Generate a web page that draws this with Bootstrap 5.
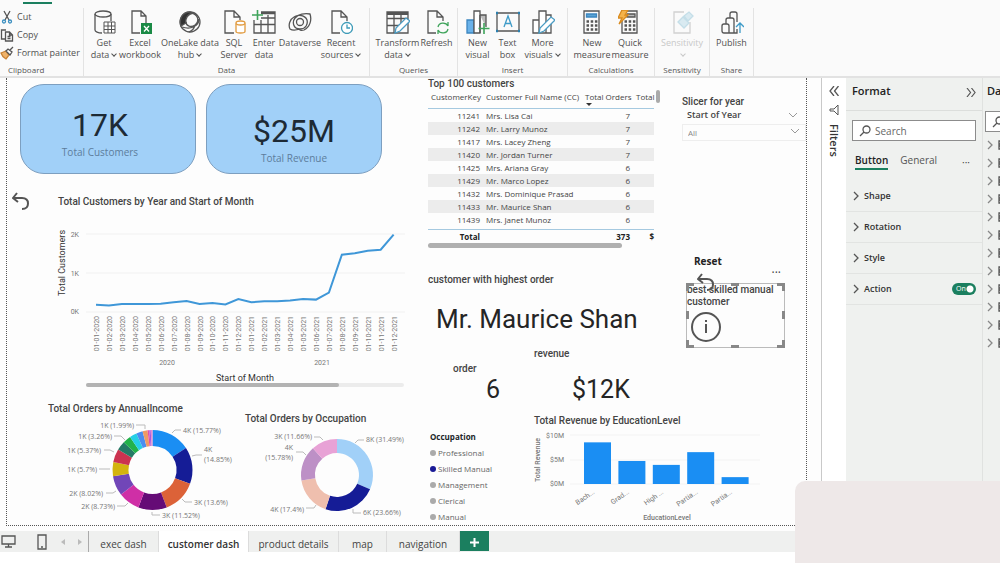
<!DOCTYPE html>
<html lang="en">
<head>
<meta charset="utf-8">
<meta name="viewport" content="width=device-width, initial-scale=1">
<title>customer dash</title>
<link href="https://cdn.jsdelivr.net/npm/bootstrap@5.3.0/dist/css/bootstrap.min.css" rel="stylesheet">
<style>
  :root { --ui: "Open Sans", "Noto Sans", sans-serif; --din: Roboto, "Liberation Sans", sans-serif; --green: #1b7f5f; }
  body { font-family: var(--ui); font-size: 9px; line-height: 12px; color: #444; background: #fff; overflow-x: hidden; }
  button { color: inherit; font: inherit; background: none; border: 0; padding: 0; }
  svg { display: block; }
  .ico { fill: none; stroke: #555; stroke-width: 1.3; }
  /* ribbon */
  .ribbon { background: #fafafa; border-bottom: 2px solid #e2e2e2; height: 78px; overflow: hidden; }
  .ribbon-tabs { height: 8px; padding: 2px 0 0 23px; }
  .ribbon-tabs span { width: 29px; height: 2px; background: var(--green); }
  .grp { border-right: 1px solid #e3e3e3; flex: none; height: 68px; }
  .grp-name { font-size: 8px; line-height: 12px; color: #555; }
  .tool { white-space: nowrap; color: #505050; flex: none; }
  .tool svg { width: 24px; height: 24px; margin: 2px 0 3px; }
  .tool[disabled] { color: #c8c8c8; }
  .drop::after { content: ""; display: inline-block; width: 4px; height: 4px; margin: 0 1px 3px 3px; border: solid currentColor; border-width: 0 1px 1px 0; transform: rotate(45deg); vertical-align: middle; }
  .clip { height: 18px; gap: 3px; color: #505050; }
  .w28 { width: 28px } .w32 { width: 32px } .w36 { width: 38px } .w40 { width: 40px } .w42 { width: 42px } .w46 { width: 46px } .w60 { width: 60px }
  .g-clip { width: 84px } .g-data { width: 286px } .g-query { width: 88px } .g-insert { width: 110px } .g-calc { width: 87px } .g-sens { width: 55px } .g-share { width: 44px }
  /* report canvas */
  .stage { background: #fdfdfd; border-right: 1px solid #c9c9c9; padding: 0 14px 5px 6px; min-width: 0; }
  .report { border: 1px dotted #555; border-top: 0; }
  .row-top { display: grid; grid-template-columns: 421fr 233fr 145fr; height: 325px; }
  .row-low { display: grid; grid-template-columns: 195fr 186fr 102fr 275fr; padding-left: 41px; }
  .vtitle { font-family: var(--din); font-size: 10px; line-height: 12px; font-weight: 500; color: #444; white-space: nowrap; margin: 0; }
  .kpis { display: grid; grid-template-columns: 1fr 1fr; padding: 6px 46px 0 13px; gap: 10px; }
  .kpi { background: #a1d0f8; border: 1px solid #7d9fc0; border-radius: 24px; height: 90px; padding: 22px 16px 0 0; font-size: 10px; color: #5d7d9c; }
  .kpi.lower { padding: 28px 0 0; }
  .kpi strong, .figure-text { font-family: var(--din); font-weight: 400; color: #1d2a35; font-size: 32px; line-height: 36px; }
  .kpi strong { margin-bottom: 3px; }
  .figure-text { font-size: 25px; line-height: 30px; color: #252525; white-space: nowrap; }
  .figure-text.name { font-size: 26px; padding: 18px 8px 0; }
  .back { padding: 18px 0 0 5px; gap: 29px; }
  .line-box { padding: 2px 11px 0 43px; }
  svg text { font-family: var(--din); font-size: 7px; fill: #777; }
  svg .axis { font-size: 9px; fill: #333; }
  svg .lab { font-family: var(--ui); fill: #777; }
  .orders { width: 226px; height: 153px; }
  .orders table { width: 226px; table-layout: fixed; font-size: 8px; line-height: 13px; color: #444; white-space: nowrap; border-collapse: collapse; }
  .orders th, .orders td { padding: 0 3px; font-weight: 400; }
  .orders thead th { height: 18px; vertical-align: top; border-bottom: 1px solid #a5c9e0; }
  .orders tbody tr:nth-child(even) { background: #ececec; }
  .orders tbody tr:last-child td { height: 17px; vertical-align: top; }
  .orders tfoot td { border-top: 1px solid #a5c9e0; font-weight: 700; color: #222; }
  .orders .sorted { position: relative; }
  .orders .sorted::after { content: ""; position: absolute; left: 4px; bottom: 2px; border: 3px solid transparent; border-top-color: #333; border-bottom: 0; }
  .c1 { width: 55px } .c2 { width: 99px } .c3 { width: 51px }
  .thumb-v { width: 4px; height: 13px; background: #aaa; border-radius: 2px; margin-left: 2px; }
  .thumb-h { height: 5px; width: 194px; background: #b0b0b0; border-radius: 3px; }
  .best { margin-top: 26px; }
  .facts { margin-top: 14px; }
  .fact-order { width: 75px; padding: 15px 3px 0 25px; }
  .fact-revenue { padding-left: 31px; }
  .fact-revenue .figure-text { padding: 15px 0 0 38px; }
  .slicer-col { padding: 18px 6px 0 21px; }
  .slicer-name { font-size: 9px; font-weight: 600; padding: 1px 2px 0 5px; }
  .year-box select { appearance: none; flex: 1; margin-top: 3px; height: 17px; border: 1px solid #eee; background: transparent; color: #888; font-size: 8px; padding: 0 5px; }
  .year-box svg { margin-left: -16px; }
  .slicer .ico { stroke: #999; }
  .reset { margin: 114px 0 0 12px; color: #222; font-size: 10px; }
  .more { text-align: right; padding-right: 19px; font-size: 12px; line-height: 12px; }
  .sel { width: 99px; height: 65px; border: 1px solid #bbb; position: relative; margin: 4px 0 0 4px; }
  .sel i { position: absolute; width: 8px; height: 8px; border: 0 solid #888; }
  .sel .tl { left: -1px; top: -1px; border-width: 3px 0 0 3px } .sel .tr { right: -1px; top: -1px; border-width: 3px 3px 0 0 }
  .sel .bl { left: -1px; bottom: -1px; border-width: 0 0 3px 3px } .sel .br { right: -1px; bottom: -1px; border-width: 0 3px 3px 0 }
  .sel .mt { left: 44px; top: -1px; border-top-width: 3px } .sel .mb { left: 44px; bottom: -1px; border-bottom-width: 3px }
  .sel .ml { left: -1px; top: 27px; border-left-width: 3px } .sel .mr { right: -1px; top: 27px; border-right-width: 3px }
  .reset-ico { position: absolute; left: 10px; top: -11px; }
  .legend-list { padding: 26px 0 0 1px; color: #666; font-size: 8px; line-height: 16px; }
  .legend-list .d-flex { gap: 2px; }
  .dot { width: 6px; height: 6px; border-radius: 50%; background: #aaa; }
  .dot.on { background: #1a1a96; }
  .occ { padding: 10px 0 0 2px; }
  .edu { padding: 12px 0 0 3px; }
  /* side panes */
  .pane { background: #eff1ef; flex: none; }
  .filters { width: 24px; background: #fff; flex: none; color: #333; }
  .filters span { writing-mode: vertical-rl; font-size: 11px; font-weight: 600; line-height: 14px; }
  .format { width: 137px; border-right: 1px solid #e0e2e0; }
  .pane h2 { font-size: 11px; line-height: 14px; font-weight: 600; color: #222; margin: 0; }
  .pane-head { height: 33px; padding: 6px 6px 0; border-bottom: 1px solid #dcdedc; }
  .find { border: 1px solid #8c8c8c; background: #fff; height: 21px; margin: 9px 6px 0; padding: 0 6px; gap: 4px; }
  .find input { border: 0; outline: 0; width: 100%; min-width: 0; font-size: 10px; padding: 0; background: none; }
  .find input::placeholder { color: #666; }
  .ftabs { font-size: 10px; line-height: 14px; padding: 12px 12px 11px 9px; gap: 12px; }
  .ftabs a { color: #555; text-decoration: none; padding-bottom: 1px; border-bottom: 2px solid transparent; }
  .ftabs a.active { color: #222; font-weight: 600; border-color: var(--green); }
  .opt { height: 31px; border-bottom: 1px solid #e2e4e2; padding: 0 6px; gap: 4px; font-weight: 600; color: #333; }
  .switch-on { position: relative; color: #fff; font-size: 7px; font-weight: 400; }
  .switch-on input { appearance: none; display: block; width: 24px; height: 12px; border-radius: 6px; background: radial-gradient(circle at 18px 6px, #fff 3px, var(--green) 4px); }
  .switch-on span { position: absolute; left: 4px; top: 0; }
  .data { width: 17px; overflow: hidden; }
  .data .pane-head { border-color: transparent; padding: 6px 0 0 4px; }
  .data .find { margin: 0 -20px 4px 2px; }
  .tree { height: 18px; padding-left: 4px; gap: 4px; }
  /* page tabs */
  .pages { background: #eff0ef; height: 21px; margin-bottom: 11px; font-size: 10px; flex: none; }
  .pages a { color: #444; text-decoration: none; border-right: 1px solid #dcdcdc; height: 21px; padding-top: 4px; }
  .pages a.active { background: #fff; font-weight: 600; color: #333; }
  .view { width: 89px; border-right: 1px solid #aaa; height: 21px; padding: 0 6px 0 1px; }
  .p70 { width: 70px } .p90 { width: 90px } .p48 { width: 48px } .p73 { width: 73px }
  .add { width: 29px; height: 20px; background: var(--green); color: #fff; padding-top: 2px; }
  .note { position: fixed; right: 0; bottom: 0; width: 205px; height: 82px; background: #eee8e8; border-radius: 10px 0 0 0; }
</style>
</head>
<body class="min-vh-100 d-flex flex-column">
<header class="ribbon">
  <div class="ribbon-tabs"><span class="d-block"></span></div>
  <div class="d-flex">
    <section class="grp g-clip d-flex flex-column">
      <button class="clip d-flex align-items-center"><svg class="ico" width="14" height="14" viewBox="0 0 14 14"><path d="M4 1l5 9M10 1L5 10"/><circle cx="4" cy="11.500" r="1.500" stroke="#3b8fc0"/><circle cx="10" cy="11.500" r="1.500" stroke="#3b8fc0"/></svg>Cut</button>
      <button class="clip d-flex align-items-center"><svg class="ico" width="14" height="14" viewBox="0 0 14 14"><path d="M5 11H1.500V2H6M5.500 4h4l3 3v6h-7zM9.500 4v3h3M7.500 8.500h3M7.500 10.500h3"/></svg>Copy</button>
      <button class="clip d-flex align-items-center text-nowrap"><svg class="ico" width="14" height="14" viewBox="0 0 14 14"><path d="M1 7l5-2 3 4-3 4C4 12 2 10 1 7z" fill="#efb36b" stroke="#c98336"/><path d="M6 5l2-2 4 3-2 3zM10 4l3-3" fill="#fff"/></svg>Format painter</button>
      <div class="grp-name ps-2 mt-auto">Clipboard</div>
    </section>
    <section class="grp g-data d-flex flex-column">
      <div class="d-flex align-items-start ps-1">
        <button class="tool w32 d-flex flex-column align-items-center"><svg class="ico" viewBox="0 0 24 24"><ellipse cx="11" cy="4" rx="8" ry="3"/><path d="M3 4v16c0 1.500 3 3 7 3M19 4v7"/><path d="M12 12h11v11H12zM12 16h11M12 19.500h11M16 12v11M19.500 12v11" fill="#fff" stroke-width="1"/></svg>Get<span class="drop">data</span></button>
        <button class="tool w40 d-flex flex-column align-items-center"><svg class="ico" viewBox="0 0 24 24"><path d="M12 23H4V1h9l5 5v7M13 1v5h5"/><rect x="13" y="13" width="11" height="11" fill="#1a8a45" stroke="none"/><path d="M16 16l5 5.500M21 16l-5 5.500" stroke="#fff"/></svg>Excel<span>workbook</span></button>
        <button class="tool w60 d-flex flex-column align-items-center"><svg class="ico" viewBox="0 0 24 24"><circle cx="12" cy="12" r="10"/><path d="M12 2C4 2 1 9 3 16l5-3C7 8 10 4 15 3z" fill="#333"/><path d="M13 3c7 1 9 8 4 12-4 3-9 1-9-3M21 9c0 7-8 11-17 8M17 15c-1 4-3 6-6 7"/></svg>OneLake data<span class="drop">hub</span></button>
        <button class="tool w28 d-flex flex-column align-items-center"><svg class="ico" viewBox="0 0 24 24"><path d="M12 23H3V1h9l6 6v3M12 1v6h6"/><path d="M14 13.500v8c0 2 9 2 9 0v-8" fill="#fff" stroke="#e19a3e"/><ellipse cx="18.500" cy="13" rx="4.500" ry="2" fill="#fff" stroke="#e19a3e"/></svg>SQL<span>Server</span></button>
        <button class="tool w32 d-flex flex-column align-items-center"><svg class="ico" viewBox="0 0 24 24"><path d="M9 2h14v21H2V10M9 3.500h14M2 14.500h21M9 8h14M9 10v13M16 5v18"/><path d="M5.500 0v10M0 5h11" stroke="#3fa45b" stroke-width="1.600"/></svg>Enter<span>data</span></button>
        <button class="tool w40 d-flex flex-column align-items-center"><svg class="ico" viewBox="0 0 24 24"><circle cx="12" cy="12" r="3.500"/><path d="M12 19C5 19 4 12 7 8s10-5 15-4c2 6 0 13-6 16-3 1-5 0-4-1 6 0 8-5 7-9-2-5-9-6-13-3-4 2-6 8-4 12 3 2 7 1 10 0"/></svg>Dataverse</button>
        <button class="tool w42 d-flex flex-column align-items-center"><svg class="ico" viewBox="0 0 24 24"><path d="M11 23H3V1h9l6 6v4M12 1v6h6"/><circle cx="18" cy="18" r="5.500" fill="#fff" stroke="#3e9bb8"/><path d="M18 14.500V18h3" stroke="#3e9bb8"/></svg>Recent<span class="drop">sources</span></button>
      </div>
      <div class="grp-name text-center mt-auto">Data</div>
    </section>
    <section class="grp g-query d-flex flex-column">
      <div class="d-flex align-items-start justify-content-center">
        <button class="tool w46 d-flex flex-column align-items-center"><svg class="ico" viewBox="0 0 24 24"><path d="M1 2h21v21H1zM1 8.500h21M1 15.500h12M8 5v18M15 5v8"/><path d="M1 3.500h21" stroke-width="3"/><path d="M9 23l1-5L20 8l4 3-10 10z" fill="#fff" stroke="#4a9cc4"/></svg>Transform<span class="drop">data</span></button>
        <button class="tool w32 d-flex flex-column align-items-center"><svg class="ico" viewBox="0 0 24 24"><path d="M11 23H3V1h9l6 6v4M12 1v6h6"/><path d="M13 17c1-5 8-5 10-1v-4M23 19c-1 5-8 5-10 1v4" stroke="#3fa45b"/></svg>Refresh</button>
      </div>
      <div class="grp-name text-center mt-auto">Queries</div>
    </section>
    <section class="grp g-insert d-flex flex-column">
      <div class="d-flex align-items-start justify-content-center">
        <button class="tool w28 d-flex flex-column align-items-center"><svg class="ico" viewBox="0 0 24 24"><path d="M1 10h7v13H1z" fill="#6ab2ea" stroke="#3c86c0"/><path d="M8 1h6v22H8z" fill="#fff"/><path d="M14 5h6v12M14 5v18" fill="#bbb"/><path d="M18 13v11M12.500 18.500h11" stroke="#3fa45b" stroke-width="1.600"/></svg>New<span>visual</span></button>
        <button class="tool w32 d-flex flex-column align-items-center"><svg class="ico" viewBox="0 0 24 24"><path d="M1 3h22v18H1z"/><path d="M8 17l4-11 4 11M9.500 13.500h5" stroke="#3e9bc8"/><path d="M0 3h2M22 3h2M0 21h2M22 21h2" stroke="#2b7fae" stroke-width="2.500"/></svg>Text<span>box</span></button>
        <button class="tool w36 d-flex flex-column align-items-center"><svg class="ico" viewBox="0 0 24 24"><path d="M2 10h6v13H2zM8 1h7v22H8zM15 5h5v18h-5z" fill="#fff"/><path d="M8 23l1-5L20 7l4 3-11 11z" fill="#fff" stroke="#4a9cc4"/></svg>More<span class="drop">visuals</span></button>
      </div>
      <div class="grp-name text-center mt-auto">Insert</div>
    </section>
    <section class="grp g-calc d-flex flex-column">
      <div class="d-flex align-items-start justify-content-center">
        <button class="tool w36 d-flex flex-column align-items-center"><svg class="ico" viewBox="0 0 24 24"><path d="M4 1h15v22H4z"/><path d="M6.500 4h10v3h-10z" fill="#5ba4d4" stroke="#3c86c0"/><path d="M6.500 11.500h11M6.500 15.500h11M6.500 19.500h11" stroke-width="2.500" stroke-dasharray="2.500 1.700"/></svg>New<span>measure</span></button>
        <button class="tool w36 d-flex flex-column align-items-center"><svg class="ico" viewBox="0 0 24 24"><path d="M4 1h15v22H4z"/><path d="M9 4h8v3H9z" fill="#bbb"/><path d="M6.500 11.500h11M6.500 15.500h11M6.500 19.500h11" stroke-width="2.500" stroke-dasharray="2.500 1.700"/><path d="M4 0h6L7 5h3L1 14l3-6H0z" fill="#f5b34a" stroke="#d98b1f"/></svg>Quick<span>measure</span></button>
      </div>
      <div class="grp-name text-center mt-auto">Calculations</div>
    </section>
    <section class="grp g-sens d-flex flex-column">
      <div class="d-flex align-items-start justify-content-center">
        <button class="tool w40 d-flex flex-column align-items-center" disabled><svg class="ico" viewBox="0 0 24 24" opacity=".5"><path d="M14 2H4v21h16V12" stroke="#aaa"/><path d="M8 12l5-5 6 6-5 5zM14 6l5-4 4 4-5 5z" fill="#b9dcea" stroke="#8fc4d8"/></svg>Sensitivity<span class="drop"></span></button>
      </div>
      <div class="grp-name text-center mt-auto">Sensitivity</div>
    </section>
    <section class="grp g-share d-flex flex-column">
      <div class="d-flex align-items-start justify-content-center">
        <button class="tool w40 d-flex flex-column align-items-center"><svg class="ico" viewBox="0 0 24 24"><path d="M17 12V4q0-2-2-2h-3q-2 0-2 2v4M14 23V10q0-2-2-2H8q-2 0-2 2v4M14 23H4q-2 0-2-2v-5q0-2 2-2h3q2 0 2 2v7M14 23h3v-4"/><path d="M20 23V13M16 17l4-4 4 4" stroke="#3e9bc8"/></svg>Publish</button>
      </div>
      <div class="grp-name text-center mt-auto">Share</div>
    </section>
  </div>
</header>

<main class="d-flex flex-grow-1">
  <div class="stage flex-grow-1">
    <div class="report">
      <div class="row-top">
        <div>
          <div class="kpis">
            <div class="kpi d-flex flex-column align-items-center"><strong>17K</strong>Total Customers</div>
            <div class="kpi lower d-flex flex-column align-items-center"><strong>$25M</strong>Total Revenue</div>
          </div>
          <div class="back d-flex align-items-center">
            <button aria-label="Back"><svg class="ico" width="17" height="19" viewBox="0 0 17 19"><path d="M5 1L1 6l5 4M1 6h9q6 0 6 5.500T10 17" stroke-width="2"/></svg></button>
            <h3 class="vtitle">Total Customers by Year and Start of Month</h3>
          </div>
          <div class="line-box">
            <svg class="w-100" viewBox="50 213 367 176" id="trend">
              <text class="axis" text-anchor="middle" transform="translate(65 263) rotate(-90)">Total Customers</text>
              <path d="M86 234h319M86 273h319M86 312h319" stroke="#f1f1f1"/>
              <text x="79" y="237" text-anchor="end">2K</text><text x="79" y="276" text-anchor="end">1K</text><text x="79" y="314" text-anchor="end">0K</text>
              <text x="167" y="365" text-anchor="middle">2020</text><text x="322" y="365" text-anchor="middle">2021</text>
              <text class="axis" x="245" y="381" text-anchor="middle">Start of Month</text>
              <rect x="86" y="383" width="318" height="4" rx="2" fill="#ececec"/><rect x="86" y="383" width="253" height="4" rx="2" fill="#b3b3b3"/>
            </svg>
          </div>
        </div>

        <div>
          <h3 class="vtitle">Top 100 customers</h3>
          <div class="d-flex align-items-start">
            <div class="orders">
              <table>
                <colgroup><col class="c1"><col class="c2"><col class="c3"><col></colgroup>
                <thead><tr><th class="text-end">CustomerKey</th><th>Customer Full Name (CC)</th><th class="text-end sorted">Total Orders</th><th class="pe-0">Total</th></tr></thead>
                <tbody>
                  <tr><td class="text-end">11241</td><td>Mrs. Lisa Cai</td><td class="text-end">7</td><td></td></tr>
                  <tr><td class="text-end">11242</td><td>Mr. Larry Munoz</td><td class="text-end">7</td><td></td></tr>
                  <tr><td class="text-end">11417</td><td>Mrs. Lacey Zheng</td><td class="text-end">7</td><td></td></tr>
                  <tr><td class="text-end">11420</td><td>Mr. Jordan Turner</td><td class="text-end">7</td><td></td></tr>
                  <tr><td class="text-end">11425</td><td>Mrs. Ariana Gray</td><td class="text-end">6</td><td></td></tr>
                  <tr><td class="text-end">11429</td><td>Mr. Marco Lopez</td><td class="text-end">6</td><td></td></tr>
                  <tr><td class="text-end">11432</td><td>Mrs. Dominique Prasad</td><td class="text-end">6</td><td></td></tr>
                  <tr><td class="text-end">11433</td><td>Mr. Maurice Shan</td><td class="text-end">6</td><td></td></tr>
                  <tr><td class="text-end">11439</td><td>Mrs. Janet Munoz</td><td class="text-end">6</td><td></td></tr>
                </tbody>
                <tfoot><tr><td class="text-end">Total</td><td></td><td class="text-end">373</td><td class="text-end pe-0">$</td></tr></tfoot>
              </table>
            </div>
            <div class="thumb-v"></div>
          </div>
          <div class="thumb-h"></div>
          <h3 class="vtitle best">customer with highest order</h3>
          <div class="figure-text name">Mr. Maurice Shan</div>
          <div class="facts d-flex">
            <div class="fact-order"><h3 class="vtitle">order</h3><div class="figure-text text-end">6</div></div>
            <div class="fact-revenue"><h3 class="vtitle">revenue</h3><div class="figure-text">$12K</div></div>
          </div>
        </div>

        <div class="slicer-col">
          <div class="slicer">
            <h3 class="vtitle">Slicer for year</h3>
            <div class="d-flex justify-content-between align-items-center slicer-name"><label for="year">Start of Year</label><svg class="ico" width="10" height="6" viewBox="0 0 10 6"><path d="M1 1l4 4 4-4" stroke-width="1"/></svg></div>
            <div class="d-flex align-items-center year-box"><select id="year"><option>All</option></select><svg class="ico" width="10" height="6" viewBox="0 0 10 6"><path d="M1 1l4 4 4-4" stroke-width="1"/></svg></div>
          </div>
          <div class="reset"><strong>Reset</strong></div>
          <div class="more">···</div>
          <div class="sel">
            <i class="tl"></i><i class="tr"></i><i class="bl"></i><i class="br"></i><i class="mt"></i><i class="mb"></i><i class="ml"></i><i class="mr"></i>
            <button class="reset-ico" aria-label="Reset"><svg class="ico" width="17" height="19" viewBox="0 0 17 19"><path d="M5 1L1 6l5 4M1 6h9q6 0 6 5.500T10 17" stroke-width="2"/></svg></button>
            <h3 class="vtitle">best skilled manual<br>customer</h3>
            <button class="ms-1 mt-1" aria-label="Info"><svg class="ico" width="30" height="30" viewBox="0 0 30 30"><circle cx="15" cy="15" r="14" stroke-width="2"/><path d="M15 12v9M15 8v2" stroke-width="2"/></svg></button>
          </div>
        </div>
      </div>

      <div class="row-low">
        <div>
          <h3 class="vtitle">Total Orders by AnnualIncome</h3>
          <svg class="w-100" viewBox="48 415 195 106" id="income"></svg>
        </div>
        <div class="occ">
          <h3 class="vtitle">Total Orders by Occupation</h3>
          <svg class="w-100" viewBox="245 425 184 96" id="occupation"></svg>
        </div>
        <ul class="legend-list list-unstyled mb-0">
          <li class="fw-bold text-dark lh-1 py-1">Occupation</li>
          <li class="d-flex align-items-center"><span class="dot"></span>Professional</li>
          <li class="d-flex align-items-center"><span class="dot on"></span>Skilled Manual</li>
          <li class="d-flex align-items-center"><span class="dot"></span>Management</li>
          <li class="d-flex align-items-center"><span class="dot"></span>Clerical</li>
          <li class="d-flex align-items-center"><span class="dot"></span>Manual</li>
        </ul>
        <div class="edu">
          <h3 class="vtitle">Total Revenue by EducationLevel</h3>
          <svg class="w-100" viewBox="534 427 272 94" id="education">
            <path d="M570 435h190M570 460h190M570 484h190" stroke="#f3f3f3"/>
            <text x="564" y="438" text-anchor="end">$10M</text><text x="564" y="462" text-anchor="end">$5M</text><text x="564" y="486" text-anchor="end">$0M</text>
            <text font-weight="500" text-anchor="middle" transform="translate(540 460) rotate(-90)">Total Revenue</text>
            <text font-weight="500" x="667" y="520" text-anchor="middle">EducationLevel</text>
          </svg>
        </div>
      </div>
    </div>
  </div>

  <aside class="filters d-flex flex-column align-items-center">
    <svg class="ico mt-2" width="10" height="10" viewBox="0 0 10 10"><path d="M5 0L1 5l4 5M9.500 0l-4 5 4 5"/></svg>
    <svg class="ico my-2" width="10" height="12" viewBox="0 0 10 12"><path d="M9 1v10L5 7H1V5h4z" stroke-width="1"/></svg>
    <span>Filters</span>
  </aside>

  <aside class="pane format">
    <div class="pane-head d-flex justify-content-between"><h2>Format</h2><svg class="ico mt-1" width="10" height="9" viewBox="0 0 10 10"><path d="M.500 0l4 5-4 5M5.500 0l4 5-4 5"/></svg></div>
    <div class="find d-flex align-items-center"><svg class="ico flex-shrink-0" width="12" height="12" viewBox="0 0 12 12"><circle cx="7.500" cy="4.500" r="3.500"/><path d="M5 7l-4 4"/></svg><input type="text" placeholder="Search" aria-label="Search"></div>
    <nav class="ftabs d-flex"><a href="#" class="active">Button</a><a href="#">General</a><button class="ms-auto">···</button></nav>
    <div class="opt d-flex align-items-center"><svg class="ico" width="8" height="10" viewBox="0 0 8 10"><path d="M2 1l4 4-4 4"/></svg>Shape</div>
    <div class="opt d-flex align-items-center"><svg class="ico" width="8" height="10" viewBox="0 0 8 10"><path d="M2 1l4 4-4 4"/></svg>Rotation</div>
    <div class="opt d-flex align-items-center"><svg class="ico" width="8" height="10" viewBox="0 0 8 10"><path d="M2 1l4 4-4 4"/></svg>Style</div>
    <div class="opt d-flex align-items-center"><svg class="ico" width="8" height="10" viewBox="0 0 8 10"><path d="M2 1l4 4-4 4"/></svg>Action<label class="switch-on ms-auto"><input type="checkbox" checked aria-label="Action"><span>On</span></label></div>
  </aside>

  <aside class="pane data">
    <div class="pane-head"><h2>Da</h2></div>
    <div class="find d-flex align-items-center"><svg class="ico flex-shrink-0" width="12" height="12" viewBox="0 0 12 12"><circle cx="7.500" cy="4.500" r="3.500"/><path d="M5 7l-4 4"/></svg></div>
    <div id="tables"></div>
  </aside>
</main>

<nav class="pages d-flex align-items-start">
  <div class="view d-flex align-items-center justify-content-between">
    <svg class="ico" width="15" height="13" viewBox="0 0 15 13"><path d="M1 1h13v8H1zM7.500 9v2.500M4 12h7"/></svg>
    <svg class="ico ms-2" width="10" height="16" viewBox="0 0 10 16"><path d="M1 1h8v14H1zM4 13h2"/></svg>
    <svg width="4" height="6" viewBox="0 0 4 6"><path d="M4 0v6L0 3z" fill="#bbb"/></svg><svg width="4" height="6" viewBox="0 0 4 6"><path d="M0 0v6l4-3z" fill="#bbb"/></svg>
  </div>
  <a href="#" class="p70 d-flex align-items-center justify-content-center">exec dash</a>
  <a href="#" class="p90 active d-flex align-items-center justify-content-center">customer dash</a>
  <a href="#" class="p90 d-flex align-items-center justify-content-center">product details</a>
  <a href="#" class="p48 d-flex align-items-center justify-content-center">map</a>
  <a href="#" class="p73 d-flex align-items-center justify-content-center">navigation</a>
  <button class="add d-flex align-items-center justify-content-center" aria-label="New page"><svg width="9" height="9" viewBox="0 0 9 9"><path d="M4.500 0v9M0 4.500h9" stroke="#fff" stroke-width="2"/></svg></button>
</nav>
<div class="note"></div>

<script src="https://cdn.jsdelivr.net/npm/bootstrap@5.3.0/dist/js/bootstrap.bundle.min.js"></script>
<script>
const add = (id, html) => document.getElementById(id).insertAdjacentHTML('beforeend', html);

// Monthly customer trend
const monthly = [190, 170, 205, 205, 205, 215, 250, 285, 205, 230, 195, 335, 250, 275, 275, 300, 335, 320, 500, 1480, 1520, 1585, 1610, 2000];
const px = i => 96 + i * 12.94;
add('trend', `<polyline fill="none" stroke="#3f97d8" stroke-width="2" points="${monthly.map((v, i) => px(i) + ',' + (312 - v * .0387)).join(' ')}"/>`);
monthly.forEach((v, i) => add('trend', `<text text-anchor="end" transform="translate(${px(i) + 3} 316) rotate(-90)">01-${String(i % 12 + 1).padStart(2, '0')}-${i < 12 ? 2020 : 2021}</text>`));

// Donuts: [share, colour]
function donut(id, cx, cy, R, r, parts, labels) {
  let a = 0, out = '';
  const total = parts.reduce((s, p) => s + p[0], 0), at = (q, t) => `${cx + q * Math.sin(t)} ${cy - q * Math.cos(t)}`;
  for (const [v, c] of parts) {
    const b = a + v / total * 2 * Math.PI;
    out += `<path fill="${c}" d="M${at(R, a)}A${R} ${R} 0 0 1 ${at(R, b)}L${at(r, b)}A${r} ${r} 0 0 0 ${at(r, a)}z"/>`;
    a = b;
  }
  for (const [x, y, s, anchor, line] of labels)
    out += `<text class="lab" x="${x}" y="${y}" text-anchor="${anchor}">${s}</text>` + (line ? `<path d="${line}" fill="none" stroke="#bbb"/>` : '');
  add(id, out);
}
donut('income', 152.5, 470, 40, 24,
  [[15.77, '#1a8ef3'], [14.85, '#151c96'], [13.6, '#dc6238'], [11.52, '#650b76'], [8.73, '#cf2fa6'], [8.02, '#7146b8'], [5.7, '#d3b40f'], [5.37, '#cb3350'], [3.7, '#257a66'], [3.26, '#22b24a'], [2.9, '#25cfe6'], [2.6, '#4b8df0'], [1.99, '#f09a64'], [.7, '#e54fa6'], [.6, '#a45be0'], [.7, '#e88ad0']],
  [[183, 433, '4K (15.77%)', 'start', 'M172 433l3-3h6'], [204, 452, '4K', 'start', 'M192 456l4-1h6'], [204, 462, '(14.85%)', 'start'], [194, 505, '3K (13.6%)', 'start', 'M182 499l3 3h7'],
   [162, 518, '3K (11.52%)', 'start', 'M152 512v3h8'], [115, 509, '2K (8.73%)', 'end', 'M128 503l-3 3h-8'], [103, 496, '2K (8.02%)', 'end', 'M116 491l-3 2h-7'], [97, 472, '1K (5.7%)', 'end', 'M110 469h-11'],
   [101, 453, '1K (5.37%)', 'end', 'M114 452l-4-2h-6'], [112, 439, '1K (3.26%)', 'end', 'M125 440l-4-4h-7'], [134, 428, '1K (1.99%)', 'end', 'M145 429v-4h-9']]);
donut('occupation', 337, 475, 36, 22,
  [[31.49, '#a1d0f8'], [23.66, '#151c96'], [17.4, '#efbfae'], [15.78, '#bd90c6'], [11.66, '#e8a2d6']],
  [[366, 442, '8K (31.49%)', 'start', 'M355 443l3-3h6'], [363, 515, '6K (23.66%)', 'start', 'M353 509v4h8'], [304, 512, '4K (17.4%)', 'end', 'M316 505l-2 3h-8'], [293, 450, '4K', 'end', 'M306 455l-3-3h-7'], [293, 460, '(15.78%)', 'end'], [312, 439, '3K (11.66%)', 'end', 'M323 440l-3-3h-6']]);

// Revenue by education level, in $M
[['Bach...', 8.5], ['Grad...', 4.7], ['High ...', 3.9], ['Partia...', 6.5], ['Partia...', 1.4]].forEach(([n, v], i) => {
  const x = 584 + i * 34.4;
  add('education', `<rect x="${x}" y="${484 - v * 4.9}" width="27" height="${v * 4.9}" fill="#1a8ef3"/><text text-anchor="end" transform="translate(${x + 11} 493) rotate(-35)">${n}</text>`);
});

for (let i = 0; i < 12; i++) add('tables', '<div class="tree d-flex align-items-center"><svg class="ico flex-shrink-0" width="7" height="10" viewBox="0 0 7 10"><path d="M1 1l4 4-4 4" stroke="#888"/></svg><svg class="ico flex-shrink-0" width="9" height="10" viewBox="0 0 9 10"><path d="M1 1h8v8H1zM1 4h8M1 6h8"/></svg></div>');
</script>
</body>
</html>
